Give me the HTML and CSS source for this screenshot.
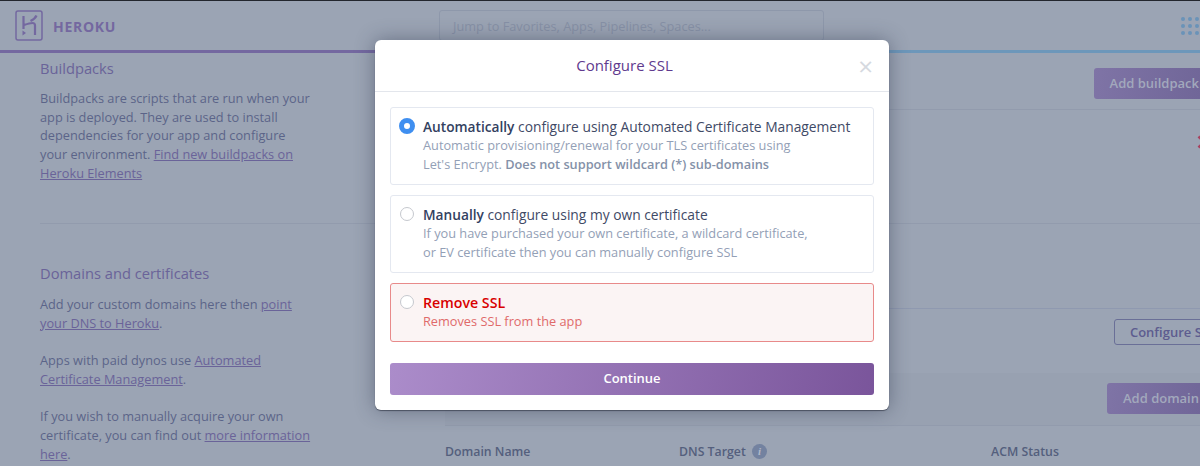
FILE: index.html
```html
<!DOCTYPE html>
<html lang="en">
<head>
    <meta charset="UTF-8">
    <meta name="viewport" content="width=device-width, initial-scale=1.0">
    <title>Configure SSL</title>
    <link rel="stylesheet" href="styles.css">
</head>
<body>
    <header class="topbar">
        <div class="brand">
            <svg class="brand-logo" width="28" height="31" viewBox="0 0 28 31">
                <rect x="1" y="1" width="26" height="29" rx="2" fill="none" stroke="#7468a0" stroke-width="1.5"/>
                <path d="M8.500 6v13M9 15c3-1 6-2 8.500-2 2 0 2.500 1 2.500 2.500V25M21.500 5.500c-1 2.500-3 4-6 5.500" fill="none" stroke="#7468a0" stroke-width="2.200"/>
                <path d="M7.500 20.500l3.500 2.500-3.500 2.500z" fill="#7468a0"/>
            </svg>
            <span class="brand-name">HEROKU</span>
        </div>
        <div class="jump">Jump to Favorites, Apps, Pipelines, Spaces...</div>
        <div class="apps-grid">
            <i></i><i></i><i></i><i></i><i></i><i></i><i></i><i></i><i></i>
        </div>
    </header>
    <div class="topbar-line"></div>

    <main class="content">
        <section class="section section-buildpacks">
            <div class="section-info">
                <h2>Buildpacks</h2>
                <p>Buildpacks are scripts that are run when your app is deployed. They are used to install dependencies for your app and configure your environment. <a href="#">Find new buildpacks on Heroku Elements</a></p>
            </div>
            <div class="section-body">
                <div class="action-row action-row-first">
                    <span class="btn btn-primary">Add buildpack</span>
                </div>
                <div class="remove-row">
                    <svg width="14" height="14" viewBox="0 0 14 14">
                        <path d="M1.500 1.500l11 11M12.500 1.500l-11 11" fill="none" stroke="#a8405e" stroke-width="2.600"/>
                    </svg>
                </div>
            </div>
        </section>

        <section class="section section-domains">
            <div class="section-info">
                <h2>Domains and certificates</h2>
                <p>Add your custom domains here then <a href="#">point your DNS to Heroku</a>.</p>
                <p>Apps with paid dynos use <a href="#">Automated Certificate Management</a>.</p>
                <p>If you wish to manually acquire your own certificate, you can find out <a href="#">more information here</a>.</p>
            </div>
            <div class="section-body">
                <div class="action-row ssl-row">
                    <span class="btn btn-outline">Configure SSL</span>
                </div>
                <div class="action-row domain-row">
                    <span class="btn btn-primary">Add domain</span>
                </div>
                <div class="domain-head">
                    <span class="col-name">Domain Name</span>
                    <span class="col-target">DNS Target <b class="info-dot">i</b></span>
                    <span class="col-status">ACM Status</span>
                </div>
            </div>
        </section>
    </main>

    <div class="modal">
        <div class="modal-head">
            <h1>Configure SSL</h1>
            <span class="modal-close">×</span>
        </div>
        <div class="modal-body">
            <div class="option">
                <span class="radio radio-on"></span>
                <div>
                    <div class="option-title"><b>Automatically</b> configure using Automated Certificate Management</div>
                    <div class="option-text">Automatic provisioning/renewal for your TLS certificates using<br>Let's Encrypt. <b>Does not support wildcard (*) sub-domains</b></div>
                </div>
            </div>
            <div class="option">
                <span class="radio"></span>
                <div>
                    <div class="option-title"><b>Manually</b> configure using my own certificate</div>
                    <div class="option-text">If you have purchased your own certificate, a wildcard certificate,<br>or EV certificate then you can manually configure SSL</div>
                </div>
            </div>
            <div class="option option-danger">
                <span class="radio"></span>
                <div>
                    <div class="option-title"><b>Remove SSL</b></div>
                    <div class="option-text">Removes SSL from the app</div>
                </div>
            </div>
            <div class="continue">Continue</div>
        </div>
    </div>
</body>
</html>
```

FILE: styles.css
```css
* {
    box-sizing: border-box;
}

html, body {
    height: 100%;
}

body {
    margin: 0;
    background: #9ba4b4;
    border-top: 1px solid #23262e;
    font-family: "Open Sans", sans-serif;
    font-size: 12.75px;
    line-height: 19px;
    color: #5b6489;
    overflow: hidden;
    position: relative;
}

/* Top bar */
.topbar {
    display: flex;
    align-items: center;
    height: 49px;
    padding-left: 14px;
}

.brand {
    display: flex;
    align-items: center;
    gap: 10px;
    width: 425px;
    padding-left: 1px;
}

.brand-name {
    margin-top: 2px;
    font-size: 14px;
    font-weight: 700;
    letter-spacing: 0.7px;
    color: #7468a0;
}

.jump {
    width: 385px;
    height: 31px;
    padding: 6px 13px;
    border: 1px solid #8e98ab;
    border-radius: 3px;
    color: #8791a6;
}

.apps-grid {
    display: grid;
    grid-template-columns: repeat(3, 4px);
    gap: 3px;
    margin-left: auto;
    margin-right: 1px;
}

.apps-grid i {
    width: 4px;
    height: 4px;
    border-radius: 50%;
    background: #6a93b8;
}

.topbar-line {
    height: 3px;
    background: linear-gradient(90deg, #7468a0 0%, #7468a0 30%, #6d97ba 73%);
}

/* Page sections */
.content {
    width: 1240px;
    padding-left: 40px;
    line-height: 18.75px;
}

.section {
    display: grid;
    grid-template-columns: 272px 1fr;
    column-gap: 133px;
}

.section-buildpacks {
    height: 171px;
    padding-top: 7px;
    border-bottom: 1px solid #929bad;
}

.section h2 {
    margin: -1px 0 11px;
    font-size: 14.7px;
    font-weight: 400;
    color: #6a6399;
}

.section-domains h2 {
    margin-bottom: 12px;
}

.section p {
    margin: 0 0 18.75px;
}

.section a {
    color: #6a6399;
}

.section-domains {
    padding-top: 41px;
}

.section-domains .section-body {
    margin-top: 43px;
}

.action-row {
    display: flex;
    justify-content: flex-end;
    padding-right: 25px;
}

.action-row-first {
    height: 42px;
    margin-top: 8px;
    border-bottom: 1px solid #929bad;
}

.btn {
    height: 31px;
    padding: 6px 16px;
    border-radius: 3px;
    font-size: 13px;
    font-weight: 600;
}

.btn-primary {
    background: linear-gradient(100deg, #7f74a6, #6e6496);
    color: #a2a8bc;
}

.btn-outline {
    height: 26px;
    padding: 3px 15px;
    border: 1px solid #6a6f97;
    color: #5d5c8f;
}

.remove-row {
    display: flex;
    justify-content: flex-end;
    padding-top: 25px;
    padding-right: 29px;
}

.ssl-row {
    height: 65px;
    padding-top: 10px;
    padding-right: 8px;
    border-top: 1px solid #8f99b0;
}

.domain-row {
    height: 53px;
    padding-top: 10px;
    background: #98a1b1;
    border-bottom: 1px solid #929bad;
}

.domain-head {
    display: flex;
    padding-top: 17px;
    font-size: 12.3px;
    font-weight: 600;
    color: #545f7d;
}

.col-name {
    width: 234px;
}

.col-target {
    width: 312px;
}

.info-dot {
    display: inline-block;
    width: 15px;
    height: 15px;
    margin-left: 3px;
    border-radius: 50%;
    background: #7382a0;
    color: #b0b8c8;
    font: italic 700 11px/15px "Liberation Serif", serif;
    text-align: center;
    vertical-align: 1px;
}

/* Modal */
.modal {
    position: absolute;
    top: 39px;
    left: 375px;
    width: 514px;
    height: 370px;
    background: #fff;
    border-radius: 6px;
    box-shadow: 0 1px 1px rgba(40, 45, 60, 0.6), 0 0 20px rgba(40, 48, 70, 0.45);
}

.modal-head {
    position: relative;
    height: 52px;
    padding-right: 15px;
    border-bottom: 1px solid #e3e6ec;
    text-align: center;
}

.modal-head h1 {
    margin: 0;
    padding-top: 15px;
    font-size: 15px;
    font-weight: 400;
    line-height: 20px;
    color: #5f3a8e;
}

.modal-close {
    position: absolute;
    top: 11px;
    right: 16px;
    font-size: 26px;
    line-height: 30px;
    color: #d5d9e0;
}

.modal-body {
    display: flex;
    flex-direction: column;
    gap: 10px;
    padding: 15px;
}

.option {
    display: flex;
    gap: 9px;
    padding: 9px 8px 10px 9px;
    border: 1px solid #e4e8f0;
    border-radius: 3px;
}

.radio {
    flex: none;
    width: 14px;
    height: 14px;
    margin-top: 2px;
    border: 1px solid #c5c8ce;
    border-radius: 50%;
    background: #fff;
}

.radio-on {
    width: 16px;
    height: 16px;
    margin: 1px -1px 0;
    border: 5.5px solid #3f8ff0;
}

.option-title {
    height: 19px;
    font-size: 13.8px;
    color: #3f4a66;
}

.option-title b {
    font-size: 13.7px;
    font-weight: 600;
    color: #33415f;
}

.option-text {
    color: #93a0b6;
}

.option-text b {
    font-weight: 600;
    color: #8491a8;
}

.option-danger {
    background: #fbf4f4;
    border-color: #e88a8a;
}

.option-danger .option-title b {
    font-size: 14.2px;
    color: #d80000;
}

.option-danger .option-text {
    color: #e06a6a;
}

.continue {
    height: 32px;
    margin-top: 11px;
    border-radius: 3px;
    background: linear-gradient(100deg, #ab8cca, #7a559b);
    color: #fff;
    font-size: 13px;
    font-weight: 600;
    line-height: 31px;
    text-align: center;
}
```
